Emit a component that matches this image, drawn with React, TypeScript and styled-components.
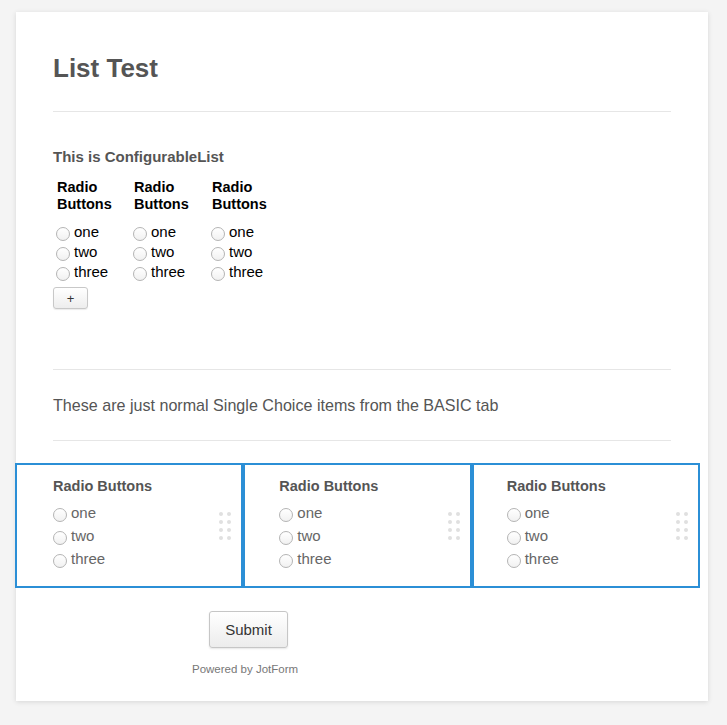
import React from 'react';
import styled, { createGlobalStyle } from 'styled-components';

const GlobalStyle = createGlobalStyle`
  body {
    margin: 0;
    background: #f4f4f4;
    font-family: "Liberation Sans", Arial, sans-serif;
  }
`;

const Page = styled.div`
  padding: 12px 19px 23px 16px;
`;

const Card = styled.form`
  background: #fff;
  box-shadow: 0 1px 5px rgba(0, 0, 0, 0.12);
  padding: 41px 37px 25px;
`;

const Title = styled.h1`
  margin: 0;
  font-size: 26px;
  line-height: 30px;
  font-weight: bold;
  color: #555;
`;

const Rule = styled.div<{ $top: number }>`
  height: 1px;
  background: #e6e6e6;
  margin-top: ${(p) => p.$top}px;
`;

const ListLabel = styled.div`
  margin-top: 36px;
  font-size: 15px;
  line-height: 18px;
  font-weight: bold;
  color: #555;
`;

const ListGrid = styled.div`
  display: grid;
  grid-template-columns: 77px 78px 78px;
  margin: 13px 0 0 3px;
`;

const ColumnHead = styled.div`
  font-size: 14.5px;
  line-height: 17px;
  font-weight: bold;
  color: #000;
  padding-left: 1px;
  margin-bottom: 9px;
`;

const Choice = styled.label<{ $row: number; $muted?: boolean }>`
  display: flex;
  align-items: flex-start;
  height: ${(p) => p.$row}px;
  font-size: 15px;
  color: ${(p) => (p.$muted ? '#666' : '#000')};
  cursor: pointer;
`;

const Circle = styled.input`
  appearance: none;
  -webkit-appearance: none;
  width: 14px;
  height: 14px;
  margin: 5px 4px 0 0;
  border: 1px solid #b4b4b4;
  border-radius: 50%;
  background: linear-gradient(#ffffff, #f1f1f1);
  box-sizing: border-box;
  flex-shrink: 0;
`;

const ChoiceText = styled.span`
  line-height: 19px;
`;

const AddButton = styled.button`
  display: block;
  width: 35px;
  height: 22px;
  margin-top: 5px;
  padding: 0;
  border: 1px solid #c8c8c8;
  border-radius: 3px;
  background: linear-gradient(#ffffff, #ededed);
  box-shadow: 0 1px 1px rgba(0, 0, 0, 0.08);
  font-family: "Liberation Sans", Arial, sans-serif;
  font-size: 13px;
  color: #333;
`;

const Description = styled.p`
  margin: 25px 0 0;
  font-size: 16.1px;
  line-height: 20px;
  color: #555;
`;

const BoxRow = styled.div`
  display: grid;
  grid-template-columns: repeat(3, 1fr);
  margin: 22px -29px 0 -38px;
`;

const FieldBox = styled.div<{ $indent: number }>`
  position: relative;
  border: 2px solid #2b8fd6;
  padding: 12px 0 14px ${(p) => p.$indent}px;
`;

const FieldLabel = styled.div`
  font-size: 14.5px;
  line-height: 18px;
  font-weight: bold;
  color: #555;
  margin-bottom: 8px;
`;

const DragHandle = styled.div`
  position: absolute;
  top: 47px;
  right: 10px;
  display: grid;
  grid-template-columns: repeat(2, 4px);
  grid-auto-rows: 4px;
  column-gap: 4px;
  row-gap: 4px;
`;

const Dot = styled.span`
  width: 4px;
  height: 4px;
  border-radius: 50%;
  background: #e0e0e0;
`;

const Footer = styled.div`
  margin-top: 23px;
  padding-left: 156px;
`;

const SubmitButton = styled.button`
  display: block;
  width: 79px;
  height: 37px;
  padding: 0;
  border: 1px solid #c6c6c6;
  border-radius: 3px;
  background: linear-gradient(#ffffff, #ececec);
  box-shadow: 0 1px 2px rgba(0, 0, 0, 0.1);
  font-family: "Liberation Sans", Arial, sans-serif;
  font-size: 15px;
  color: #333;
`;

const Powered = styled.div`
  margin: 15px 0 0 -17px;
  font-size: 11.5px;
  line-height: 13px;
  color: #777;
`;

const options = ['one', 'two', 'three'];

const ListColumn = ({ name }: { name: string }) => (
  <div>
    <ColumnHead>
      Radio
      <br />
      Buttons
    </ColumnHead>
    {options.map((o) => (
      <Choice key={o} $row={20}>
        <Circle type="radio" name={name} />
        <ChoiceText>{o}</ChoiceText>
      </Choice>
    ))}
  </div>
);

const SingleChoice = ({ name, indent }: { name: string; indent: number }) => (
  <FieldBox $indent={indent}>
    <FieldLabel>Radio Buttons</FieldLabel>
    {options.map((o) => (
      <Choice key={o} $row={23} $muted>
        <Circle type="radio" name={name} />
        <ChoiceText>{o}</ChoiceText>
      </Choice>
    ))}
    <DragHandle>
      {Array.from({ length: 8 }).map((_, i) => (
        <Dot key={i} />
      ))}
    </DragHandle>
  </FieldBox>
);

const App = () => {
  return (
    <>
      <GlobalStyle />
      <Page>
        <Card onSubmit={(e) => e.preventDefault()}>
          <Title>List Test</Title>
          <Rule $top={28} />

          <ListLabel>This is ConfigurableList</ListLabel>
          <ListGrid>
            <ListColumn name="l1" />
            <ListColumn name="l2" />
            <ListColumn name="l3" />
          </ListGrid>
          <AddButton type="button">+</AddButton>

          <Rule $top={60} />
          <Description>These are just normal Single Choice items from the BASIC tab</Description>
          <Rule $top={25} />

          <BoxRow>
            <SingleChoice name="s1" indent={36} />
            <SingleChoice name="s2" indent={34} />
            <SingleChoice name="s3" indent={33} />
          </BoxRow>

          <Footer>
            <SubmitButton type="submit">Submit</SubmitButton>
            <Powered>Powered by JotForm</Powered>
          </Footer>
        </Card>
      </Page>
    </>
  );
};

export default App;
